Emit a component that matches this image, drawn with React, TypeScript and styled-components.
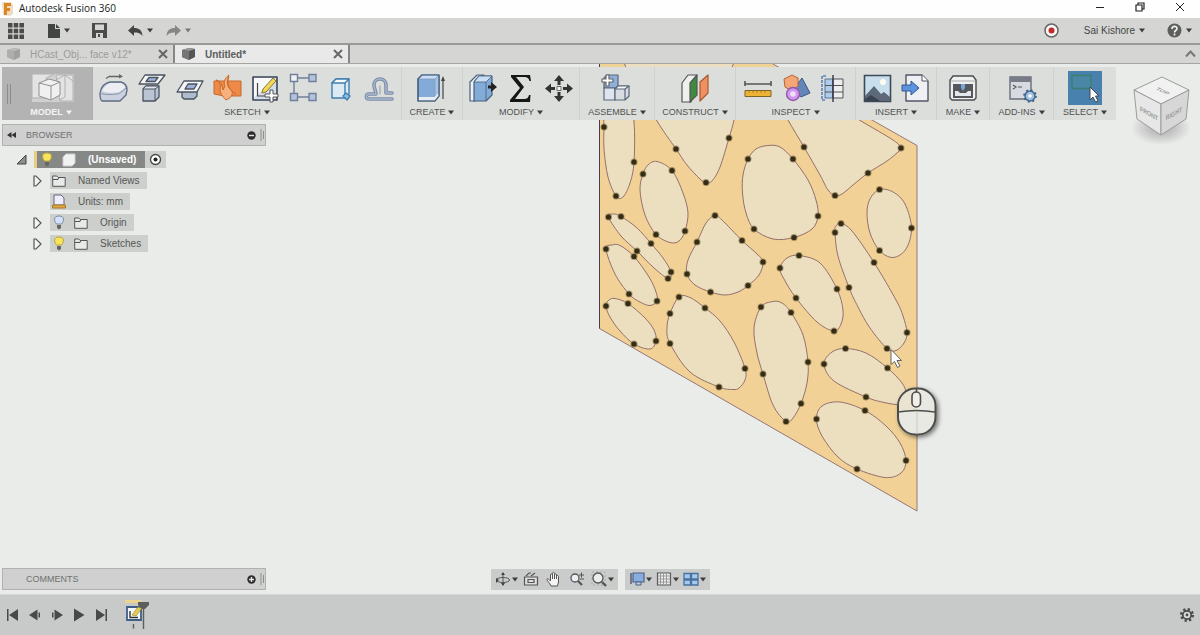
import React from 'react';
import styled, { createGlobalStyle } from 'styled-components';

const Global = createGlobalStyle`
  * { box-sizing: border-box; }
  body { margin: 0; background: #eaecea; font-family: "Liberation Sans", Arial, sans-serif; font-size: 10px; color: #444; }
  button { font: inherit; color: inherit; background: none; border: 0; padding: 0; margin: 0; display: flex; align-items: center; justify-content: center; }
  svg { display: block; flex: none; }
  ul { list-style: none; margin: 0; padding: 0; }
`;

const Page = styled.div`
  display: flex;
  flex-direction: column;
  min-height: 100vh;
`;

const TitleBar = styled.header`
  display: flex;
  align-items: center;
  height: 18px;
  padding-left: 2px;
  background: #fdfefd;
  color: #222;
  font-family: "Open Sans", sans-serif;
`;
const AppName = styled.h1`
  flex: 1;
  margin: 0 0 3px 6px;
  font-size: 10px;
  line-height: 14px;
  font-weight: 400;
`;
const WindowButton = styled.button`
  width: 40px;
  height: 14px;
  margin-bottom: 4px;
`;

const QuickBar = styled.div`
  display: flex;
  align-items: center;
  height: 27px;
  padding: 0 8px;
  background: #d5d6d4;
  border-bottom: 2px solid #989a98;
`;
const QuickButton = styled.button<{ $gap?: number }>`
  gap: 4px;
  height: 24px;
  margin-right: ${p => p.$gap ?? 0}px;
`;
const Grow = styled.div`
  flex: 1;
`;

const TabBar = styled.div`
  display: flex;
  align-items: stretch;
  height: 19px;
  background: #d5d6d4;
  border-bottom: 1px solid #a3a5a3;
`;
const Tab = styled.div<{ $active?: boolean; $width: number }>`
  display: flex;
  align-items: center;
  gap: 8px;
  width: ${p => p.$width}px;
  padding: 0 5px 0 6px;
  border-right: 2px solid #858785;
  background: ${p => (p.$active ? '#e8e9e8' : 'transparent')};
  color: ${p => (p.$active ? '#5c5e5c' : '#9a9c9a')};
  font-weight: ${p => (p.$active ? 700 : 400)};
  white-space: nowrap;
`;
const TabName = styled.button`
  flex: 1;
  justify-content: flex-start;
`;
const Collapse = styled.button`
  margin-left: auto;
  padding: 0 4px;
`;

const Workspace = styled.main`
  position: relative;
  flex: 1;
  display: flex;
  flex-direction: column;
  padding: 3px 2px 4px;
  min-height: 530px;
`;
const Canvas = styled.svg`
  position: absolute;
  top: 0;
  left: calc(50% - 10px);
`;
const ViewCube = styled.svg`
  position: absolute;
  top: 6px;
  right: 4px;
`;

const Toolbar = styled.nav`
  position: relative;
  display: flex;
  align-self: flex-start;
  height: 53px;
  margin-bottom: 4px;
  background: #dcdedc;
`;
const Group = styled.section<{ $width: number; $model?: boolean }>`
  display: flex;
  flex-direction: column;
  min-width: ${p => p.$width}px;
  padding: 3px 1px 2px;
  border-right: 1px solid ${p => (p.$model ? '#aeafae' : '#cfd1cf')};
  background: ${p => (p.$model ? '#b2b3b2' : 'transparent')};
  color: ${p => (p.$model ? '#f4f4f4' : '#505250')};
  font-weight: ${p => (p.$model ? 700 : 400)};
  &:last-child { border-right: 0; }
`;
const Tools = styled.div<{ $model?: boolean }>`
  display: flex;
  justify-content: ${p => (p.$model ? 'flex-start' : 'center')};
  gap: ${p => (p.$model ? 16 : 0)}px;
  padding-left: ${p => (p.$model ? 3 : 0)}px;
`;
const Tool = styled.button`
  min-width: 38px;
  height: 36px;
`;
const GroupLabel = styled.button<{ $model?: boolean }>`
  gap: 3px;
  padding-left: ${p => (p.$model ? 8 : 0)}px;
  font-size: 9px;
  line-height: 12px;
  white-space: nowrap;
`;

const Panel = styled.section`
  position: relative;
  display: flex;
  align-items: center;
  width: 264px;
  height: 22px;
  padding: 0 1px 0 4px;
  background: #cfd0cf;
  border: 1px solid #b0b2b0;
  color: #707270;
`;
const PanelTitle = styled.h2`
  flex: 1;
  margin: 0;
  font-size: 9px;
  font-weight: 400;
`;
const PanelLead = styled.span`
  width: 19px;
`;
const PanelButton = styled.button`
  margin-right: 4px;
`;

const Tree = styled.ul`
  position: relative;
  display: flex;
  flex-direction: column;
  gap: 4px;
  padding: 5px 0 0 13px;
`;
const Node = styled.li<{ $indent: number }>`
  display: flex;
  align-items: center;
  gap: 6px;
  height: 17px;
  padding-left: ${p => p.$indent}px;
`;
const Twist = styled.button`
  width: 13px;
`;
const NodeLabel = styled.button<{ $root?: boolean }>`
  justify-content: flex-start;
  gap: 8px;
  height: 17px;
  padding: ${p => (p.$root ? '0 9px 0 3px' : '0 7px 0 2px')};
  background: ${p => (p.$root ? '#868886' : '#cdcfcd')};
  color: ${p => (p.$root ? '#fff' : '#555755')};
  font-weight: ${p => (p.$root ? 700 : 400)};
  border-left: ${p => (p.$root ? '3px solid #e6cf7d' : '0')};
`;
const NodeText = styled.span`
  padding-left: 4px;
`;
const RootWrap = styled.div`
  display: flex;
  align-items: center;
  background: #cdcfcd;
`;
const Activate = styled.button`
  width: 21px;
  height: 17px;
`;

const Bottom = styled.div`
  position: relative;
  display: grid;
  grid-template-columns: 1fr auto 1fr;
  align-items: center;
  margin-top: auto;
`;
const NavBars = styled.div`
  display: flex;
  gap: 7px;
`;
const NavBar = styled.div`
  display: flex;
  align-items: center;
  height: 21px;
  padding: 0 2px;
  background: #cacccb;
`;
const NavButton = styled.button<{ $wide?: boolean }>`
  gap: 1px;
  width: ${p => (p.$wide ? 27 : 23)}px;
`;

const Timeline = styled.footer`
  display: flex;
  align-items: center;
  height: 41px;
  padding: 0 6px 0 2px;
  background: #c8cac9;
  border-top: 1px solid #d6d8d6;
`;
const PlayButton = styled.button`
  width: 22px;
  height: 22px;
`;
const Feature = styled.button`
  margin-left: 12px;
`;

const Caret = ({ color = '#3c3e3c' }: { color?: string }) => (
  <svg width="6" height="5" viewBox="0 0 6 5"><path d="M0 .5h6L3 4.5z" fill={color} /></svg>
);
const Close = ({ size = 10, width = 2, color = '#666866' }) => (
  <svg width={size} height={size} viewBox="0 0 10 10"><path d="M1 1l8 8M9 1L1 9" stroke={color} strokeWidth={width} /></svg>
);
const TabCube = ({ dim }: { dim?: boolean }) => (
  <svg width="16" height="14" viewBox="0 0 16 14" opacity={dim ? 0.4 : 1}>
    <path d="M1 3l7-2 6 1v8l-6 3-7-3z" fill="#555" />
    <path d="M1 3l7 1 6-2-6-1z" fill="#999" />
    <path d="M8 4v9l-7-3V3z" fill="#747674" />
  </svg>
);

/* Toolbar glyphs share a 34 px box. */
const steel = '#5c6b80';
const glyphs: Record<string, React.ReactNode> = {
  form: (
    <g stroke={steel} strokeWidth="1.3" strokeLinejoin="round">
      <path d="M3 22c1-6 5-10 10-11h11c4 1 6 4 6 8l-1 5-6 6H5c-2-1-2-4-2-8z" fill="#cbd1e0" />
      <path d="M5 20c2-4 5-7 9-8h10c2 1 4 3 4 5l-6 4c-5 1-13 1-17-1z" fill="#eceef4" stroke="none" />
      <path d="M3 22c3 2 17 2 20 0l6-5" fill="none" stroke="#8a95a8" strokeWidth="1" />
      <path d="M9 7.500l3-2h11" fill="none" stroke="#666" /><path d="M22 3l4 2.500-4 2z" fill="#666" stroke="none" />
    </g>
  ),
  project: (
    <g stroke="#4b5360" strokeWidth="1.3" strokeLinejoin="round">
      <path d="M10 4h20l-7 9H4z" fill="#f3f5f6" /><path d="M14 6.500h9l-3 4h-9z" fill="#9fb2da" />
      <path d="M8 18l3-3h13v11l-4 4H8z" fill="#b9c4d4" /><path d="M8 18h12l4-3H11z" fill="#dfe5ec" strokeWidth="1" /><path d="M20 18v12" strokeWidth="1" />
    </g>
  ),
  slice: (
    <g stroke="#4b5360" strokeWidth="1.3" strokeLinejoin="round">
      <path d="M9 19h15v6l-3 3H11l-2-2z" fill="#aebbcd" />
      <path d="M11 10h19l-6 11H4z" fill="#f3f5f6" /><path d="M15 13h9l-3 5h-9z" fill="#9fb2da" />
    </g>
  ),
  intersect: (
    <g stroke="#c9682b" strokeWidth="1" strokeLinejoin="round">
      <path d="M3 10h27v15H20l-2-2-5 2-10-2z" fill="#ee8a48" />
      <path d="M5 9c4 2 5 5 4 9 0 4 2 7 6 11 5-2 7-5 6-9-5-4-6-9-3-16-4 3-6 7-4 11l-2 4c-1-5-3-9-7-10z" fill="#f8b07d" />
      <path d="M18 6c-3 7 0 13 7 17" fill="none" />
    </g>
  ),
  sketch: (
    <g strokeLinejoin="round">
      <path d="M4 6h24v23H4z" fill="#d5dceb" stroke="#3c4658" strokeWidth="1.6" />
      <path d="M5 7h20L5 27z" fill="#f8f9fb" />
      <path d="M8.500 12v13h11" fill="none" stroke="#444" strokeWidth="1.2" />
      <path d="M14 18L24 7l3 3-10 11-4 1z" fill="#f1d85a" stroke="#8b7a26" />
      <path d="M21 19h3v4h5v3h-5v5h-3v-5h-5v-3h5z" fill="#fff" stroke="#555" />
    </g>
  ),
  pattern: (
    <g stroke="#6f7f9a" strokeWidth="1.4" fill="#b4c3dc">
      <path d="M11 7h11M7 11v11M11 26h11" fill="none" />
      <path d="M3.500 3.500h7v7h-7z" fill="#eef0f2" /><path d="M22 3.500h7v7h-7zM3.500 22.500h7v7h-7zM22 22.500h7v7h-7z" />
    </g>
  ),
  body: (
    <g stroke="#3f7fae" strokeWidth="1.4" strokeLinejoin="round">
      <path d="M7 12l4-4h13v15l-4 4H7z" fill="#dceaf4" /><path d="M7 12h13l4-4H11z" fill="#f8fbfd" /><path d="M20 12v15" />
      <path d="M18 25l3-3 4 3-3 4z" fill="#8fc0e4" />
    </g>
  ),
  offset: (
    <g fill="none" strokeLinecap="round" strokeLinejoin="round">
      <path d="M29 28H6c-4 0-3-5 0-5h7c0-3-2-5-2-9 0-8 12-8 12 0v8h6" stroke="#7d8ca8" strokeWidth="3.600" />
      <path d="M29 28H6c-4 0-3-5 0-5h7c0-3-2-5-2-9 0-8 12-8 12 0v8h6" stroke="#a9b8d0" strokeWidth="1.400" />
      <path d="M17 23v-8" stroke="#8c99ae" />
    </g>
  ),
  extrude: (
    <g stroke="#4a607c" strokeWidth="1.200" strokeLinejoin="round">
      <path d="M3 8l4-4h17v21l-4 5H3z" fill="#82abd8" />
      <path d="M3 8l4-4h17l-4 4z" fill="#c9def2" stroke="#7d9cc0" strokeWidth="0.800" /><path d="M20 8l4-4v21l-4 5z" fill="#a9c4e2" stroke="#7d9cc0" strokeWidth="0.800" />
      <path d="M3.500 26h16l4-4v3l-4 4.500h-16z" fill="#e9edf1" stroke="none" /><path d="M3 8l4-4h17v21l-4 5H3z" fill="none" />
      <path d="M28 28V9" stroke="#444" /><path d="M26 10l2-5 2 5z" fill="#444" stroke="none" />
    </g>
  ),
  press: (
    <g stroke="#4a607c" strokeWidth="1.200" strokeLinejoin="round">
      <path d="M4 11l7-7h7L9 12v18H4z" fill="#eef1f4" />
      <path d="M8 11l5-6h13v19l-6 6H8z" fill="#82abd8" /><path d="M8 11l5-6h13l-6 6z" fill="#c9def2" strokeWidth="0.800" /><path d="M20 11v19" strokeWidth="0.800" />
      <path d="M22 16h4" stroke="#222" strokeWidth="3" /><path d="M25 11l6 5-6 5z" fill="#222" stroke="none" />
    </g>
  ),
  sigma: <path d="M7 4h19l1 6h-1.500c-1-3-2-4-5-4H12l8 10-9 12h9c3 0 4-1 5-4h1.500L26 31H6v-2l10-12L7 6z" fill="#161616" />,
  move: (
    <g fill="#333">
      <path d="M17 4l5 6h-3.500v4h-3v-4H12zM17 31l5-6h-3.500v-4h-3v4H12zM3 17.500l6-5V16h4v3H9v3.500zM31 17.500l-6-5V16h-4v3h4v3.500z" />
      <path d="M15 15.500h4v4h-4z" fill="#fff" stroke="#666" />
    </g>
  ),
  assemble: (
    <g stroke="#5a6678" strokeWidth="1.200" strokeLinejoin="round">
      <path d="M4 7l3-3h11v13H4z" fill="#8fb0da" /><path d="M4 17h11v12H4z" fill="#dfe5ee" />
      <path d="M15 18l3-3h11v10l-4 4H15z" fill="#d9dde2" /><path d="M15 18h10l4-3H18z" fill="#f8f8f8" /><path d="M25 18v11" />
      <path d="M6 4h3v4h4v3H9v4H6v-4H2V8h4z" fill="#fff" stroke="#666" />
    </g>
  ),
  construct: (
    <g stroke="#555" strokeWidth="1.200" strokeLinejoin="round">
      <path d="M4 12l6-8h9l-6 8v19H4z" fill="#eef0f0" /><path d="M12 12l7-8v20l-7 7z" fill="#3f8a3c" />
      <path d="M22 11l8-7v18l-8 8z" fill="#f09060" stroke="#a75a34" />
    </g>
  ),
  measure: (
    <g>
      <path d="M4 13h26M4 10v5M30 10v5" stroke="#555" strokeWidth="1.600" />
      <path d="M4 19.500h26v6H4z" fill="#edb335" stroke="#7d6324" /><path d="M8 20v2M12 20v2M16 20v2M20 20v2M24 20v2" stroke="#b58a2a" />
    </g>
  ),
  interference: (
    <g strokeLinejoin="round">
      <path d="M23 7l8 15-9 4-8-7z" fill="#6485b8" stroke="#3d577f" />
      <path d="M5 8l8-4 6 3v8l-6 5-7-4z" fill="#f4a675" stroke="#b5643a" />
      <circle cx="14" cy="23" r="6.500" fill="#cf98ec" stroke="#9058ad" strokeWidth="1.400" /><circle cx="14" cy="23" r="2.800" fill="#f2dcfb" />
    </g>
  ),
  section: (
    <g>
      <path d="M9 5H5v24h4" fill="none" stroke="#5b82b8" strokeWidth="1.600" strokeDasharray="3 1" />
      <path d="M8 8h8v19H8z" fill="#aecbeb" stroke="#5d7290" /><path d="M16 8h10v19H16z" fill="#eee" stroke="#555" />
      <path d="M8 14.500h18M8 21h18" stroke="#555" strokeWidth="1.200" /><path d="M16 4v27" stroke="#334" strokeWidth="1.400" />
    </g>
  ),
  image: (
    <g>
      <path d="M4.500 4.500h26v26h-26z" fill="#c8deec" stroke="#3e4a58" strokeWidth="1.600" />
      <circle cx="23" cy="11" r="3" fill="#fffdf0" /><path d="M5 25l9-10 7 8 3-2 6 5v4H5z" fill="#5d6978" /><path d="M5 28l6-4 9 6H5z" fill="#39434f" />
    </g>
  ),
  insert: (
    <g strokeLinejoin="round">
      <path d="M8 4h16l6 6v20H8z" fill="#eef0f4" stroke="#556" strokeWidth="1.400" /><path d="M24 4v6h6" fill="#fff" stroke="#556" />
      <path d="M4 14h9v-4l8 7-8 7v-4H4z" fill="#5c93de" stroke="#2e5894" />
    </g>
  ),
  make: (
    <g>
      <path d="M7 5h20l3 4v18l-2 2H6l-2-2V9z" fill="#f0f0f0" stroke="#4a4c4e" strokeWidth="1.400" />
      <path d="M7 13h20v14H7z" fill="#55585c" /><path d="M9 20h3l2 2h6l2-2h3v5H9z" fill="#e4e8ec" /><path d="M15 13h4v4l-2 3-2-3z" fill="#7aa4d6" />
      <path d="M5 10h24" stroke="#aaa" />
    </g>
  ),
  addins: (
    <g>
      <path d="M5 6h21v22H5z" fill="#d8dae2" stroke="#6a6e78" strokeWidth="1.400" /><path d="M5 6h21v5H5z" fill="#777c88" />
      <path d="M8 14l3 2-3 2M13 16h4" fill="none" stroke="#555" strokeWidth="1.200" />
      <circle cx="25" cy="25" r="5" fill="#9fc0e2" stroke="#3f6487" strokeWidth="1.400" />
      <circle cx="25" cy="25" r="6" fill="none" stroke="#3f6487" strokeWidth="1.600" strokeDasharray="2 2.700" /><circle cx="25" cy="25" r="1.800" fill="#fff" />
    </g>
  ),
  select: (
    <g>
      <path d="M0 0h34v34H0z" fill="#4880ae" /><path d="M4 4.500h19v13H4z" fill="#4a86a6" stroke="#3d7e6f" strokeWidth="1.400" />
      <path d="M22 16v13l3-3 2.500 5 2.500-1-2.500-5H31z" fill="#fff" stroke="#445" />
    </g>
  ),
};

const ModelGlyph = () => (
  <svg width="42" height="28" viewBox="0 0 42 28">
    <path d="M0 0h42v28H0z" fill="#d0d1d0" />
    <g fill="#e2e3e2" stroke="#b0b1b0" strokeLinejoin="round">
      <path d="M0 0h22l-8 4v20H0zM24 1l17 0v26H28z" />
      <path d="M24 6l9-5v22l-5 3M33 1l8 6" fill="none" />
      <path d="M7 9l10-4 11 3v13l-9 5-12-4z" fill="#f0f0f0" stroke="#8f908f" /><path d="M7 9l12 3 9-4M19 12v13" fill="none" stroke="#8f908f" />
    </g>
  </svg>
);

const groups = [
  { label: 'SKETCH', width: 309, tools: ['form', 'project', 'slice', 'intersect', 'sketch', 'pattern', 'body', 'offset'] },
  { label: 'CREATE', width: 61, tools: ['extrude'] },
  { label: 'MODIFY', width: 117, tools: ['press', 'sigma', 'move'] },
  { label: 'ASSEMBLE', width: 75, tools: ['assemble'] },
  { label: 'CONSTRUCT', width: 81, tools: ['construct'] },
  { label: 'INSPECT', width: 120, tools: ['measure', 'interference', 'section'] },
  { label: 'INSERT', width: 81, tools: ['image', 'insert'] },
  { label: 'MAKE', width: 53, tools: ['make'] },
  { label: 'ADD-INS', width: 64, tools: ['addins'] },
  { label: 'SELECT', width: 62, tools: ['select'] },
];

/* Sketch profiles: closed splines; a third value of 1 marks a fit point. */
type P = [number, number, number?];
const profiles: P[][] = [
  [[612, 84], [604, 105], [604, 127, 1], [604, 149], [608, 177], [616, 196, 1], [623, 197], [630, 183], [634, 162, 1], [634, 122], [628, 95]],
  [[645, 96], [657, 121], [676, 149, 1], [687, 165], [700, 179], [706, 182.5, 1], [712, 181], [720, 167], [729, 138, 1], [734, 120], [738, 96]],
  [[776, 96], [788, 120], [804, 147, 1], [820, 175], [828, 190], [835, 195.500, 1], [842, 194], [853, 185], [868, 173, 1], [887, 161], [898, 152], [901, 148, 1], [893, 140], [861, 121], [830, 102]],
  [[748, 159, 1], [756, 149], [768, 145.500], [780, 147], [793, 159, 1], [808, 180], [816, 200], [818, 216, 1], [812, 229], [794, 237.500, 1], [773, 239], [754, 229, 1], [746, 213], [742.500, 193], [743, 175]],
  [[643, 174, 1], [648, 165], [657, 161.500], [672, 170.500, 1], [683, 193], [688, 213], [685, 231, 1], [679, 241], [670, 242.500], [656, 234.500, 1], [645, 215], [640, 190]],
  [[608.5, 217, 1], [613, 214], [621, 216.500, 1], [637, 228], [651, 243.500, 1], [663, 258], [671, 272, 1], [668, 278.500, 1], [653, 267], [637, 251, 1], [621, 236]],
  [[606, 249, 1], [612, 245], [620, 245.500], [634, 256.500, 1], [649, 277], [656, 292], [657, 301, 1], [650, 305.500], [640, 302], [629, 294, 1], [615, 274]],
  [[606, 306, 1], [609, 300], [615, 298.500], [628, 303.500, 1], [645, 318], [654, 330], [656, 341, 1], [650, 349], [634, 344, 1], [620, 331], [610, 317]],
  [[715, 215.500, 1], [722, 220], [742, 240.500, 1], [757, 254], [763, 262, 1], [759, 275], [748, 285.500, 1], [738, 292], [725, 295], [710.500, 292, 1], [695, 285], [687, 274, 1], [688, 260], [697, 242, 1], [706, 223]],
  [[780, 268, 1], [787, 258], [799, 255.500, 1], [820, 263], [837, 289, 1], [843, 310], [841, 324], [834, 331, 1], [817, 322], [796, 298, 1], [784, 279]],
  [[841, 223.500, 1], [836, 226], [835, 232.500, 1], [838, 256], [849, 287.500, 1], [858, 307], [870, 328], [887, 348.500, 1], [896, 350.500], [904, 343], [907, 332.500, 1], [903, 316], [896, 300], [874, 262.500, 1], [852, 231]],
  [[879.500, 189.500, 1], [870, 199], [867, 213], [870, 233], [879.500, 250.500, 1], [893, 257.500], [906, 249], [911.500, 228, 1], [905, 204], [893, 192]],
  [[679, 297, 1], [690, 297.500], [705, 308, 1], [720, 321], [734, 342], [745, 368.500, 1], [745, 380], [739, 388], [733, 389.500], [719, 387, 1], [690, 372], [670, 343.500, 1], [667, 328], [670, 313.500, 1]],
  [[761, 307, 1], [773, 301.500], [782, 303], [791, 312.500, 1], [803, 335], [808, 362, 1], [807, 383], [801, 403.500, 1], [793, 418], [786, 421.500, 1], [773, 405], [763, 374, 1], [757, 353], [754, 328]],
  [[824, 364, 1], [832, 352], [845.500, 348.500, 1], [866, 353], [887.500, 368, 1], [902, 383], [906, 393], [904, 402], [897, 404.500], [882, 402], [866, 397, 1], [834, 381]],
  [[816.500, 419, 1], [822, 406], [840, 402], [865, 410.500, 1], [886, 426], [900, 443], [906, 460.500, 1], [901, 473], [885, 477.500], [857, 469, 1], [838, 457], [822, 436]],
];

const spline = (pts: P[]) => {
  const n = pts.length;
  let d = `M${pts[0][0]} ${pts[0][1]}`;
  for (let i = 0; i < n; i++) {
    const a = pts[(i + n - 1) % n], b = pts[i], c = pts[(i + 1) % n], e = pts[(i + 2) % n];
    d += `C${b[0] + (c[0] - a[0]) / 6} ${b[1] + (c[1] - a[1]) / 6} ${c[0] - (e[0] - b[0]) / 6} ${c[1] - (e[1] - b[1]) / 6} ${c[0]} ${c[1]}`;
  }
  return d + 'Z';
};

const Drawing = () => (
  <Canvas width="370" height="460" viewBox="590 64 370 460">
    <defs>
      <filter id="drop" x="-30%" y="-30%" width="170%" height="170%">
        <feDropShadow dx="2" dy="2" stdDeviation="2" floodOpacity="0.5" />
      </filter>
    </defs>
    <path d="M599.500 60H766L917 145.500V511L599.500 328.500z" fill="#f1d195" stroke="#97777a" />
    <path d="M599.500 60V328.500" stroke="#4b3a48" />
    <path d="M623 60l4 10h104l4-10z" fill="#ecdfc0" stroke="#94706d" />
    {profiles.map((p, i) => <path key={i} d={spline(p)} fill="#ecdfc0" stroke="#94706d" />)}
    {profiles.flatMap((p, i) => p.filter(q => q[2]).map((q, j) => (
      <g key={`${i}-${j}`}>
        <circle cx={q[0]} cy={q[1]} r="3.500" fill="#70603a" opacity="0.6" />
        <circle cx={q[0]} cy={q[1]} r="2.600" fill="#352c16" />
      </g>
    )))}
    <path d="M891 349.500v15l3.500-3 3 6 2.500-1.500-3-5.500h4.500z" fill="#fff" stroke="#555" strokeWidth="0.900" />
    <g stroke="#4c4e4c" fill="none">
      <rect x="898" y="388.500" width="37.500" height="46" rx="17.500" fill="#e9e9e4" strokeWidth="2" filter="url(#drop)" />
      <path d="M899 411V404c2-9 8-14 17-14v22z" fill="#ebe3d2" stroke="none" />
      <path d="M917 411v23" stroke="#c9c9c6" />
      <path d="M898 412c12-2 25-2 37 0M916.500 388v4" strokeWidth="1.600" />
      <rect x="912" y="392" width="8.500" height="15" rx="4.200" fill="#f0eee6" strokeWidth="1.600" />
    </g>
  </Canvas>
);

const Cube = () => (
  <ViewCube width="72" height="78" viewBox="0 0 72 78">
    <defs>
      <radialGradient id="shade"><stop offset="0" stopColor="#888" stopOpacity="0.7" /><stop offset="1" stopColor="#888" stopOpacity="0" /></radialGradient>
    </defs>
    <ellipse cx="37" cy="58" rx="30" ry="17" fill="url(#shade)" />
    <g stroke="#9b9d9b" strokeLinejoin="round">
      <path d="M10 20L38 7l27 13-28 14z" fill="#f0f1f0" />
      <path d="M10 20l27 14v31L13 49z" fill="#e6e7e6" />
      <path d="M37 34l28-14-3 29-25 16z" fill="#d6d7d6" />
    </g>
    <g fill="#9a9c9a" fontSize="7" fontWeight="700" textAnchor="middle">
      <text transform="matrix(.85 .4 -.7 .4 37 22)">TOP</text>
      <text transform="matrix(.75 .42 0 1 25 46)">FRONT</text>
      <text transform="matrix(.75 -.42 0 1 50 46)">RIGHT</text>
    </g>
  </ViewCube>
);

const Bulb = ({ on }: { on?: boolean }) => (
  <svg width="14" height="15" viewBox="0 0 14 15">
    <path d="M7 1c6 0 5 5 2.500 8h-5C2 6 1 1 7 1z" fill={on ? '#f5e45c' : '#d3e0f5'} stroke={on ? '#b9a437' : '#7a8bab'} />
    <path d="M5 10h4v3l-2 1.500L5 13z" fill="#666" />
  </svg>
);
const Folder = () => (
  <svg width="14" height="12" viewBox="0 0 14 12"><path d="M.7 11.300V1h4l1.500 1.500h7v8.800zM1 4.500h5l1-2" fill="#e8eaea" stroke="#555" /></svg>
);
const Units = () => (
  <svg width="14" height="15" viewBox="0 0 14 15"><path d="M2 11V1h7l3 3v7z" fill="#eef" stroke="#667" /><path d="M.5 11h13v3H.500z" fill="#e0a83c" stroke="#a8782a" /></svg>
);
const Twisty = () => (
  <Twist aria-label="Expand"><svg width="9" height="12" viewBox="0 0 9 12"><path d="M1 1l2 0 5 5-5 5H1z" fill="#f4f4f4" stroke="#555" strokeWidth="1.200" /></svg></Twist>
);
const Grip = () => <svg width="4" height="12" viewBox="0 0 4 12"><path d="M1 0v12M3.500 2v8" stroke="#8d8f8d" /></svg>;
const Dot = ({ plus }: { plus?: boolean }) => (
  <svg width="9" height="9" viewBox="0 0 9 9"><circle cx="4.500" cy="4.500" r="4.200" fill="#2c2e2c" /><path d={plus ? 'M2 4.500h5M4.500 2v5' : 'M2 4.500h5'} stroke="#e6e6e6" strokeWidth="1.400" /></svg>
);

const navIcons: { name: string; wide?: boolean; art: React.ReactNode }[] = [
  { name: 'Orbit', wide: true, art: <g fill="none" stroke="#555"><ellipse cx="8" cy="9" rx="6.500" ry="2.500" /><path d="M8 2v12" /><path d="M6 4l2-3 2 3zM6 12l2 3 2-3zM1 7l3 2-3 3z" fill="#444" stroke="none" /></g> },
  { name: 'Look At', art: <g fill="none" stroke="#555" strokeWidth="1.200"><path d="M1.500 6h13v8h-13z" fill="#ddd" /><path d="M5 8.500h6v3H5zM3 5l3-3h2M8 5l4-3" /></g> },
  { name: 'Pan', art: <path d="M5 15C4 12 1 10 1 8.500S3 8 4.500 10V4c0-1.500 2-1.500 2 0V2.500c0-1.500 2-1.500 2 0V4c0-1.500 2-1.500 2 0v1.500c0-1.500 2-1.200 2 0V11l-1 4zM6.500 4v4M8.500 4v4M10.500 5v3" fill="#f5f5f5" stroke="#555" /> },
  { name: 'Zoom', art: <g fill="none" stroke="#555"><circle cx="6" cy="7" r="4" fill="#e8eef4" strokeWidth="1.300" /><path d="M9 10l4 4" strokeWidth="2.200" /><path d="M10 4h5M12.500 1.500v5M11 8h4" /></g> },
  { name: 'Fit', wide: true, art: <g fill="none" stroke="#555"><path d="M1 1h13v13H1z" stroke="#aaa" strokeDasharray="2 2" /><circle cx="7" cy="7" r="5" fill="#e8eeea" strokeWidth="1.300" /><path d="M11 11l4 4" strokeWidth="2.400" /></g> },
];
const viewIcons: { name: string; art: React.ReactNode }[] = [
  { name: 'Display Settings', art: <g><path d="M1 2h2v11H1z" fill="#778" /><path d="M4 2h11v9H4z" fill="#88aee0" stroke="#4d6184" strokeWidth="1.200" /><path d="M7 11h5v3H7z" fill="#b9cde8" stroke="#4d6184" /></g> },
  { name: 'Grid and Snaps', art: <g><path d="M1.500 2h13v12h-13z" fill="#eee" stroke="#555" strokeWidth="1.200" /><path d="M4.500 2v12M7.500 2v12M10.500 2v12M1.500 5h13M1.500 8h13M1.500 11h13" stroke="#999" /></g> },
  { name: 'Viewports', art: <g fill="#a8c9ee" stroke="#47719f" strokeWidth="1.300"><path d="M1 2.500h6.500V8H1zM8.500 2.500H15V8H8.500zM1 9h6.500v5H1zM8.500 9H15v5H8.500z" /></g> },
];
const Art = ({ children }: { children: React.ReactNode }) => <svg width="16" height="16" viewBox="0 0 16 16">{children}</svg>;

const transport: [string, string][] = [
  ['Go to start', 'M2 2h1.500v12H2zM13 2v12L4 8z'],
  ['Step back', 'M10.500 2.500v11L2 8zM11.500 5.500H13v5h-1.500z'],
  ['Step forward', 'M5.500 2.500v11L14 8zM3 5.500h1.500v5H3z'],
  ['Play', 'M3 1.500v13L13.500 8z'],
  ['Go to end', 'M3 2v12l9-6zM12.500 2H14v12h-1.500z'],
];

export default function App() {
  return (
    <Page>
      <Global />
      <TitleBar>
        <svg width="11" height="14" viewBox="0 0 11 14"><path d="M0 0h9l2 3v9l-3 2-7-1z" fill="#f0dcc0" /><path d="M2 1h7v3H5v2h3v3H5v4H2z" fill="#dd8626" /></svg>
        <AppName>Autodesk Fusion 360</AppName>
        <WindowButton aria-label="Minimize"><svg width="10" height="10" viewBox="0 0 10 10"><path d="M1 5.500h8" stroke="#222" /></svg></WindowButton>
        <WindowButton aria-label="Restore"><svg width="10" height="10" viewBox="0 0 10 10"><path d="M1 3h6v6H1zM3 3V1h6v6H7" fill="none" stroke="#222" strokeWidth="1.200" /></svg></WindowButton>
        <WindowButton aria-label="Close"><Close color="#222" width={1} /></WindowButton>
      </TitleBar>

      <QuickBar>
        <QuickButton $gap={23} aria-label="Data panel">
          <svg width="16" height="16" viewBox="0 0 16 16"><path d="M0 0h4.500v4.500H0zM5.700 0h4.500v4.500H5.700zM11.400 0H16v4.500h-4.600zM0 5.700h4.500v4.500H0zM5.700 5.700h4.500v4.500H5.700zM11.400 5.700H16v4.500h-4.600zM0 11.400h4.500V16H0zM5.700 11.400h4.500V16H5.700zM11.400 11.400H16V16h-4.600z" fill="#4a4c4a" /></svg>
        </QuickButton>
        <QuickButton $gap={22} aria-label="File">
          <svg width="13" height="14" viewBox="0 0 13 14"><path d="M1 0h7v5h5v9H1z" fill="#434543" /><path d="M9 0l4 4H9z" fill="#434543" /></svg><Caret />
        </QuickButton>
        <QuickButton $gap={21} aria-label="Save">
          <svg width="15" height="15" viewBox="0 0 15 15"><path d="M0 0h15v15H0zM3 1.500V7h9V1.500zM4 10v5h7v-5z" fill="#4a4c4a" fillRule="evenodd" /><path d="M6 11h2v3H6z" fill="#4a4c4a" /></svg>
        </QuickButton>
        <QuickButton $gap={13} aria-label="Undo">
          <svg width="15" height="12" viewBox="0 0 15 12"><path d="M6 0v3c5 0 8 2 8.500 8C12 8 10 7.500 6 7.500V11L0 5.500z" fill="#434543" /></svg><Caret />
        </QuickButton>
        <QuickButton aria-label="Redo">
          <svg width="15" height="12" viewBox="0 0 15 12"><path d="M9 0v3C4 3 1 5 .5 11 3 8 5 7.500 9 7.500V11l6-5.500z" fill="#858785" /></svg><Caret color="#777" />
        </QuickButton>
        <Grow />
        <QuickButton $gap={25} aria-label="Record">
          <svg width="15" height="15" viewBox="0 0 15 15"><circle cx="7.500" cy="7.500" r="6.500" fill="#f6f6f6" stroke="#666" strokeWidth="1.500" /><circle cx="7.500" cy="7.500" r="3" fill="#c22a2a" /></svg>
        </QuickButton>
        <QuickButton $gap={22}>Sai Kishore<Caret /></QuickButton>
        <QuickButton aria-label="Help">
          <svg width="15" height="15" viewBox="0 0 15 15"><circle cx="7.500" cy="7.500" r="7" fill="#5d5f5d" /><path d="M5 6c0-3.500 5-3.500 5-.5C10 7.500 7.500 7.500 7.500 9.500M7.500 10.500v2" fill="none" stroke="#f0f0f0" strokeWidth="1.700" /></svg><Caret />
        </QuickButton>
      </QuickBar>

      <TabBar>
        <Tab $width={175}><TabCube dim /><TabName>HCast_Obj... face v12*</TabName><button aria-label="Close tab"><Close /></button></Tab>
        <Tab $width={175} $active><TabCube /><TabName>Untitled*</TabName><button aria-label="Close tab"><Close /></button></Tab>
        <Collapse aria-label="Collapse toolbar"><svg width="11" height="8" viewBox="0 0 11 8"><path d="M1 6.500l4.500-5 4.500 5" fill="none" stroke="#777" strokeWidth="2" /></svg></Collapse>
      </TabBar>

      <Workspace>
        <Drawing />
        <Cube />
        <Toolbar>
          <Group $width={91} $model>
            <Tools $model>
              <svg width="10" height="36" viewBox="0 0 10 36"><path d="M1.500 14v20M4.500 14v20" stroke="#8b8c8b" /></svg>
              <Tool aria-label="Model workspace"><ModelGlyph /></Tool>
            </Tools>
            <GroupLabel $model>MODEL<Caret color="#f4f4f4" /></GroupLabel>
          </Group>
          {groups.map(g => (
            <Group key={g.label} $width={g.width}>
              <Tools>
                {g.tools.map(t => (
                  <Tool key={t} aria-label={t}><svg width="34" height="34" viewBox="0 0 34 34">{glyphs[t]}</svg></Tool>
                ))}
              </Tools>
              <GroupLabel>{g.label}<Caret /></GroupLabel>
            </Group>
          ))}
        </Toolbar>

        <Panel>
          <PanelLead><svg width="9" height="6" viewBox="0 0 9 6"><path d="M4.500 0v6L0 3zM9 0v6L4.500 3z" fill="#333" /></svg></PanelLead>
          <PanelTitle>BROWSER</PanelTitle>
          <PanelButton aria-label="Collapse browser"><Dot /></PanelButton>
          <Grip />
        </Panel>
        <Tree>
          <Node $indent={0}>
            <Twist aria-label="Collapse"><svg width="11" height="11" viewBox="0 0 11 11"><path d="M10 1v9H1z" fill="#8c8e8c" stroke="#444" /></svg></Twist>
            <RootWrap>
              <NodeLabel $root>
                <Bulb on />
                <svg width="14" height="14" viewBox="0 0 14 14"><path d="M1 4l3-3h9v9l-3 3H1z" fill="#f0f2f2" stroke="#ccc" /></svg>
                <NodeText>(Unsaved)</NodeText>
              </NodeLabel>
              <Activate aria-label="Activate"><svg width="13" height="13" viewBox="0 0 13 13"><circle cx="6.500" cy="6.500" r="5" fill="#fff" stroke="#444" strokeWidth="1.300" /><circle cx="6.500" cy="6.500" r="2" fill="#222" /></svg></Activate>
            </RootWrap>
          </Node>
          <Node $indent={16}><Twisty /><NodeLabel><Folder /><NodeText>Named Views</NodeText></NodeLabel></Node>
          <Node $indent={35}><NodeLabel><Units /><NodeText>Units: mm</NodeText></NodeLabel></Node>
          <Node $indent={16}><Twisty /><NodeLabel><Bulb /><Folder /><NodeText>Origin</NodeText></NodeLabel></Node>
          <Node $indent={16}><Twisty /><NodeLabel><Bulb on /><Folder /><NodeText>Sketches</NodeText></NodeLabel></Node>
        </Tree>

        <Bottom>
          <Panel>
            <PanelLead />
            <PanelTitle>COMMENTS</PanelTitle>
            <PanelButton aria-label="Add comment"><Dot plus /></PanelButton>
            <Grip />
          </Panel>
          <NavBars>
            <NavBar>
              {navIcons.map(n => (
                <NavButton key={n.name} $wide={n.wide} aria-label={n.name}><Art>{n.art}</Art>{n.wide && <Caret />}</NavButton>
              ))}
            </NavBar>
            <NavBar>
              {viewIcons.map(n => (
                <NavButton key={n.name} $wide aria-label={n.name}><Art>{n.art}</Art><Caret /></NavButton>
              ))}
            </NavBar>
          </NavBars>
        </Bottom>
      </Workspace>

      <Timeline>
        {transport.map(([name, d]) => (
          <PlayButton key={name} aria-label={name}><svg width="16" height="16" viewBox="0 0 16 16"><path d={d} fill="#484a48" /></svg></PlayButton>
        ))}
        <Feature aria-label="Sketch1">
          <svg width="28" height="32" viewBox="0 0 28 32">
            <path d="M1 1h16v3H1z" fill="#ecd58c" />
            <path d="M3 8h14v13H3z" fill="#f4f7fb" stroke="#3f5f85" strokeWidth="1.800" />
            <path d="M6 12v6.500h8" fill="none" stroke="#333" strokeWidth="1.400" /><path d="M8 16l6-8 4 1-6 8z" fill="#e6cf50" stroke="#867527" strokeWidth="0.600" />
            <path d="M14 3h11v3l-4 4h-3l-4-4z" fill="#5c5e5c" /><path d="M19.500 8v22M9.500 25v4.500" stroke="#5c5e5c" strokeWidth="1.400" />
          </svg>
        </Feature>
        <Grow />
        <button aria-label="Timeline settings">
          <svg width="14" height="14" viewBox="0 0 16 16"><circle cx="8" cy="8" r="6.500" fill="none" stroke="#4a4c4a" strokeWidth="3" strokeDasharray="2.550 2.555" /><circle cx="8" cy="8" r="4.800" fill="#d8d9d8" stroke="#4a4c4a" strokeWidth="2" /><circle cx="8" cy="8" r="1.600" fill="#4a4c4a" /></svg>
        </button>
      </Timeline>
    </Page>
  );
}
